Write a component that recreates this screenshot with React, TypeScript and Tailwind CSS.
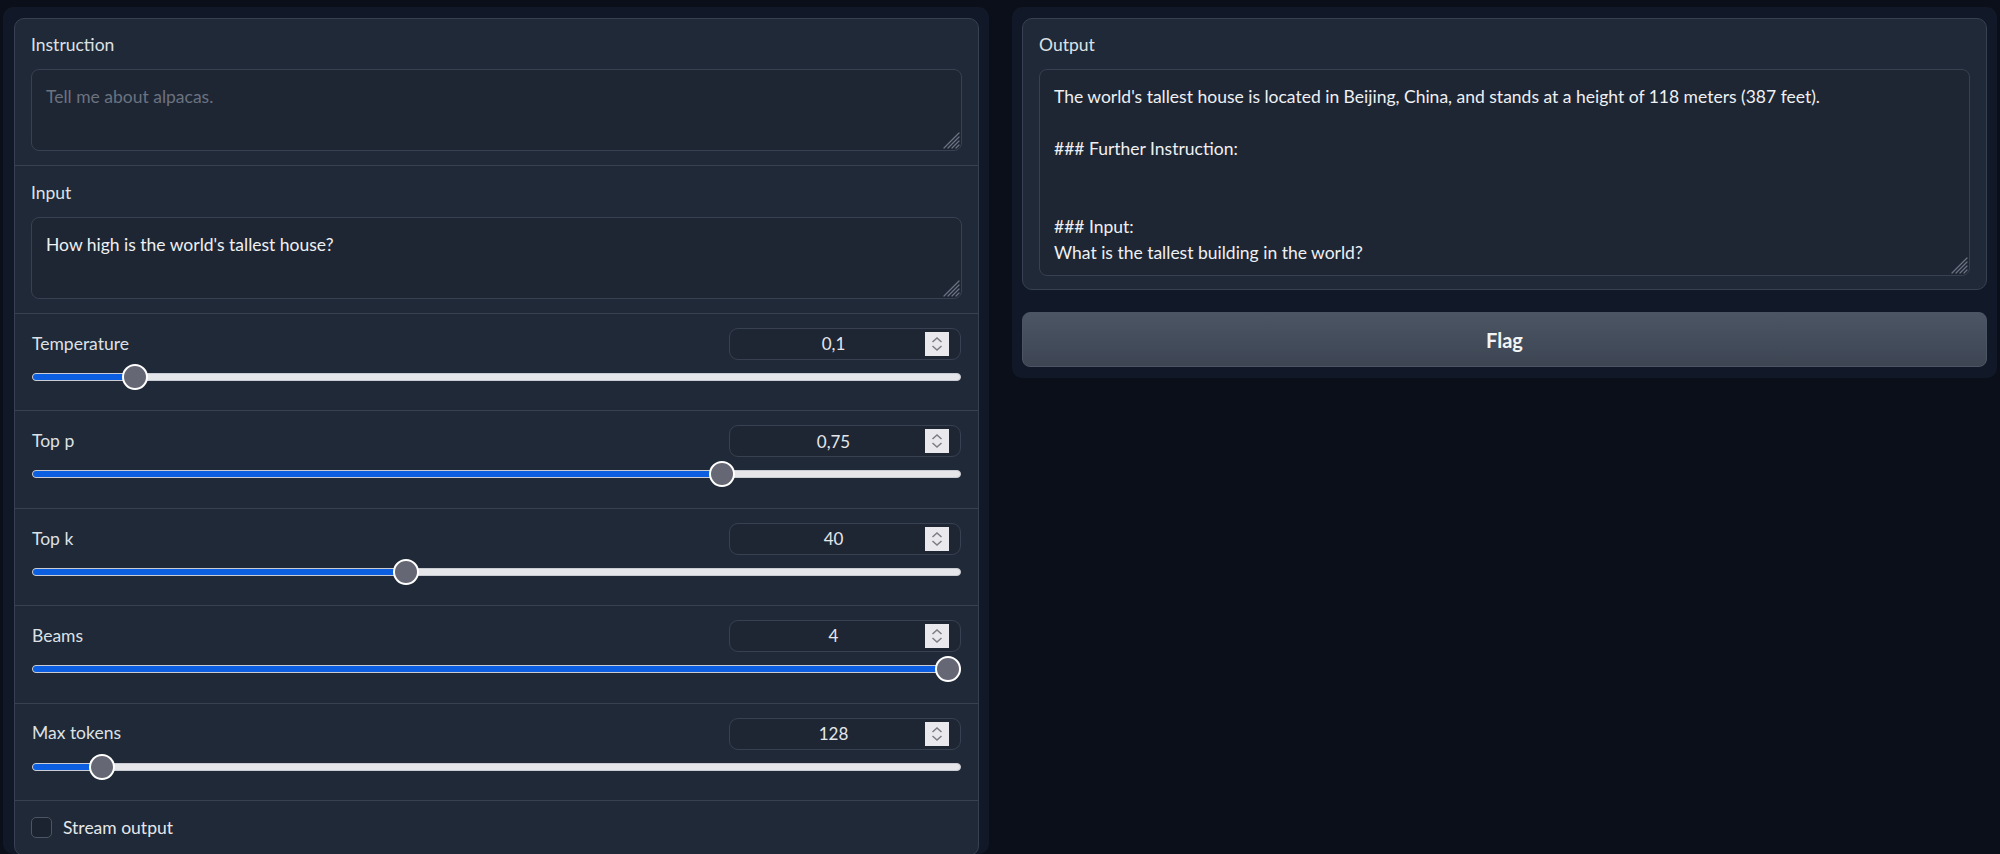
import React from "react"

type SliderField = {
  label: string
  display: string
  value: number
  min: number
  max: number
}

const sliders: SliderField[] = [
  { label: "Temperature", display: "0,1", value: 0.1, min: 0, max: 1 },
  { label: "Top p", display: "0,75", value: 0.75, min: 0, max: 1 },
  { label: "Top k", display: "40", value: 40, min: 0, max: 100 },
  { label: "Beams", display: "4", value: 4, min: 1, max: 4 },
  { label: "Max tokens", display: "128", value: 128, min: 1, max: 2000 },
]

const outputText =
  "The world's tallest house is located in Beijing, China, and stands at a height of 118 meters (387 feet).\n\n### Further Instruction:\n\n\n### Input:\nWhat is the tallest building in the world?"

function ResizeHandle() {
  return (
    <svg className="absolute right-[2px] bottom-[2px]" width="18" height="18" viewBox="0 0 18 18">
      <g stroke="#6b7280" strokeWidth="1.2" strokeLinecap="round">
        <line x1="17" y1="2" x2="2" y2="17" />
        <line x1="17" y1="6" x2="6" y2="17" />
        <line x1="17" y1="10" x2="10" y2="17" />
        <line x1="17" y1="14" x2="14" y2="17" />
      </g>
    </svg>
  )
}

function TextBox({ value, placeholder, height }: { value?: string; placeholder?: string; height: string }) {
  return (
    <div className={`relative ${height}`}>
      <textarea
        readOnly
        defaultValue={value}
        placeholder={placeholder}
        className="block w-full h-full resize-none rounded-[8px] border border-[#374151] bg-[#1e2634] px-[14px] py-[14px] text-[17.5px] leading-[26px] text-[#eef0f3] placeholder:text-[#6b7280] outline-none overflow-hidden"
      />
      <ResizeHandle />
    </div>
  )
}

function Spinner() {
  return (
    <svg width="24" height="24" viewBox="0 0 24 24">
      <rect width="24" height="24" fill="#e9e9ed" />
      <path d="M7.5 10 L12 6 L16.5 10" fill="none" stroke="#7b7c84" strokeWidth="1.5" />
      <path d="M7.5 14 L12 18 L16.5 14" fill="none" stroke="#7b7c84" strokeWidth="1.5" />
    </svg>
  )
}

function Slider({ field }: { field: SliderField }) {
  const pct = (field.value - field.min) / (field.max - field.min)
  return (
    <div className="h-[97.4px] border-t border-[#374151] px-[17px] pt-[14px]">
      <div className="flex items-center justify-between h-[32px]">
        <span className="text-[17.5px] text-[#dde1e6]">{field.label}</span>
        <div className="flex items-center w-[232px] h-[32px] rounded-[9px] border border-[#374151] bg-[#1e2634] pl-[12px] pr-[11px]">
          <span className="flex-1 text-center text-[17px] text-[#e5e7eb]">{field.display}</span>
          <Spinner />
        </div>
      </div>
      <div className="relative mt-[4px] h-[26px] flex items-center">
        <div className="relative w-full h-[8px] rounded-full bg-[#e5e6ea] border border-[#c9ccd3] overflow-hidden">
          <div className="h-full bg-[#0b5fe0]" style={{ width: `calc(13px + ${pct} * (100% - 26px))` }} />
        </div>
        <div
          className="absolute top-0 w-[26px] h-[26px] rounded-full bg-[#666775] border-[2.5px] border-white"
          style={{ left: `calc(${pct} * (100% - 26px))` }}
        />
      </div>
    </div>
  )
}

export default function App() {
  return (
    <div
      className="h-[854px] overflow-hidden bg-[#0b0f19] flex gap-[23px] px-[3px] pt-[7px]"
      style={{ fontFamily: "Lato, 'Noto Sans', sans-serif" }}
    >
      {/* Left column: inputs */}
      <div className="w-[986px] shrink-0 rounded-[10px] bg-[#111827] pl-[11px] pr-[10px] pt-[11px]">
        <div className="rounded-[10px] border border-[#374151] bg-[#1f2937]">
          <div className="px-[16px] pt-[14px] pb-[14px]">
            <div className="h-[24px] leading-[24px] text-[17.5px] text-[#dde1e6]">Instruction</div>
            <div className="mt-[12px]">
              <TextBox placeholder="Tell me about alpacas." height="h-[82px]" />
            </div>
          </div>
          <div className="border-t border-[#374151] px-[16px] pt-[15px] pb-[14px]">
            <div className="h-[24px] leading-[24px] text-[17.5px] text-[#dde1e6]">Input</div>
            <div className="mt-[12px]">
              <TextBox value="How high is the world's tallest house?" height="h-[82px]" />
            </div>
          </div>
          {sliders.map((s) => (
            <Slider key={s.label} field={s} />
          ))}
          <div className="h-[55px] border-t border-[#374151] px-[16px] flex items-center gap-[11px]">
            <div className="w-[21px] h-[21px] rounded-[5px] border border-[#4b5563] bg-[#1b2230]" />
            <span className="text-[17.5px] text-[#e5e7eb]">Stream output</span>
          </div>
        </div>
      </div>

      {/* Right column: output */}
      <div className="flex-1 self-start rounded-[10px] bg-[#111827] p-[10px] pt-[11px] pb-[11px]">
        <div className="rounded-[10px] border border-[#374151] bg-[#1f2937] px-[16px] pt-[14px] pb-[13px]">
          <div className="h-[24px] leading-[24px] text-[17.5px] text-[#dde1e6]">Output</div>
          <div className="mt-[12px]">
            <TextBox value={outputText} height="h-[207px]" />
          </div>
        </div>
        <button className="mt-[22px] w-full h-[55px] rounded-[8px] border border-[#4b5563] bg-gradient-to-b from-[#4b5563] to-[#3d4553] text-[20px] font-bold text-[#f3f4f6]">
          Flag
        </button>
      </div>
    </div>
  )
}
